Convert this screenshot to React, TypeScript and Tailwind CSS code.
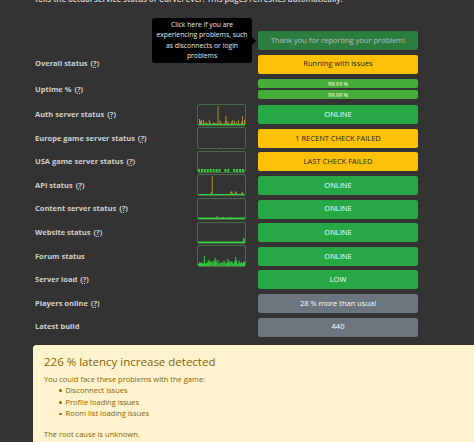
import React from "react";

type Bar = { x: number; h: number; w?: number; c: string };

const GOLD = "#b59430";
const GREEN = "#2fd33a";

function rng(seed: number) {
  let s = seed;
  return () => {
    s = (s * 16807) % 2147483647;
    return (s - 1) / 2147483646;
  };
}

function makeChart(kind: string): Bar[] {
  const r = rng(kind.length * 97 + 13);
  const bars: Bar[] = [];
  if (kind === "auth") {
    for (let i = 0; i < 48; i++) {
      const v = r();
      if (v > 0.25) bars.push({ x: i, h: 1 + r() * 5, c: GOLD });
    }
    bars.push({ x: 20, h: 19, c: GOLD }, { x: 28, h: 9, c: GOLD }, { x: 45, h: 9, c: GOLD });
    bars.push({ x: 0, h: 1, w: 48, c: GREEN });
  }
  if (kind === "europe") {
    bars.push({ x: 22, h: 0.6, c: "#777" });
  }
  if (kind === "usa") {
    for (let i = 0; i < 48; i += 3) {
      if (i === 24 || i === 33) continue;
      bars.push({ x: i, h: 3, w: 2, c: GREEN });
    }
  }
  if (kind === "api") {
    bars.push({ x: 14, h: 19, c: GOLD }, { x: 13, h: 3, c: GOLD });
    for (let i = 32; i < 46; i++) {
      if (r() > 0.4) bars.push({ x: i, h: 1 + r() * 3, c: GOLD });
    }
    bars.push({ x: 0, h: 1, w: 48, c: GREEN });
  }
  if (kind === "content") {
    bars.push({ x: 0, h: 1.5, w: 48, c: GREEN });
    bars.push({ x: 19, h: 3, c: GOLD }, { x: 25, h: 2, c: GREEN }, { x: 33, h: 2, c: GREEN });
  }
  if (kind === "website") {
    bars.push({ x: 0, h: 1.5, w: 48, c: GREEN });
    bars.push({ x: 46, h: 5, w: 1.5, c: GREEN });
  }
  if (kind === "forum") {
    for (let i = 0; i < 48; i++) {
      bars.push({ x: i, h: 2 + r() * 4, c: GREEN });
    }
    bars.push({ x: 6, h: 10, c: GREEN }, { x: 17, h: 8, c: GREEN }, { x: 30, h: 7, c: GREEN }, { x: 38, h: 9, c: GREEN });
  }
  return bars;
}

function Chart({ kind }: { kind: string }) {
  const bars = makeChart(kind);
  return (
    <div className="w-[49px] h-[22px] border border-[#4b6a4b] rounded-[2px] overflow-hidden">
      <svg width="47" height="20" viewBox="0 0 48 20" preserveAspectRatio="none">
        {bars.map((b, i) => (
          <rect key={i} x={b.x} y={20 - b.h} width={b.w ?? 1} height={b.h} fill={b.c} />
        ))}
      </svg>
    </div>
  );
}

function Help() {
  return (
    <span className="ml-[3px]">
      (<span className="underline decoration-dotted">?</span>)
    </span>
  );
}

type Row = {
  label: string;
  help?: boolean;
  chart?: string;
  text: string;
  tone: "green" | "yellow" | "gray";
};

const rows: Row[] = [
  { label: "Auth server status", help: true, chart: "auth", text: "ONLINE", tone: "green" },
  { label: "Europe game server status", help: true, chart: "europe", text: "1 RECENT CHECK FAILED", tone: "yellow" },
  { label: "USA game server status", help: true, chart: "usa", text: "LAST CHECK FAILED", tone: "yellow" },
  { label: "API status", help: true, chart: "api", text: "ONLINE", tone: "green" },
  { label: "Content server status", help: true, chart: "content", text: "ONLINE", tone: "green" },
  { label: "Website status", help: true, chart: "website", text: "ONLINE", tone: "green" },
  { label: "Forum status", chart: "forum", text: "ONLINE", tone: "green" },
  { label: "Server load", help: true, text: "LOW", tone: "green" },
  { label: "Players online", help: true, text: "28 % more than usual", tone: "gray" },
  { label: "Latest build", text: "440", tone: "gray" },
];

const toneClass = {
  green: "bg-[#28a745] text-white",
  yellow: "bg-[#ffc107] text-[#212529]",
  gray: "bg-[#6c757d] text-white",
};

function Status({ text, tone }: { text: string; tone: Row["tone"] }) {
  return (
    <div className={`w-[160px] h-[19px] rounded-[2px] flex items-center justify-center text-[7.5px] ${toneClass[tone]}`}>
      {text}
    </div>
  );
}

const bullets = ["Disconnect issues", "Profile loading issues", "Room list loading issues"];

export default function App() {
  return (
    <div className="h-[442px] overflow-hidden bg-[#333333] font-['Open_Sans',sans-serif]">
      <p className="pl-[35px] -mt-[7px] h-[10px] text-[8px] font-semibold text-[#d6d6d6] whitespace-nowrap">
        tells the actual service status of CurveFever. This pages refreshes automatically.
      </p>

      <div className="relative pl-[35px] pt-[25.7px]">
        <div className="absolute left-[152px] top-[15px] w-[100px] h-[45px] bg-black rounded-[3px] flex items-center justify-center text-center text-[6.8px] leading-[10.5px] text-[#e8e8e8]">
          Click here if you are
          <br />
          experiencing problems, such
          <br />
          as disconnects or login
          <br />
          problems
          <span className="absolute -right-[4px] top-[19px] w-0 h-0 border-y-[4px] border-y-transparent border-l-[4px] border-l-black" />
        </div>

        <div className="flex flex-col">
          <div className="h-[23.6px] flex items-center">
            <div className="w-[223px]" />
            <div className="w-[160px] h-[19px] rounded-[2px] bg-[#28a745] opacity-65 text-white text-[7.5px] flex items-center justify-center">
              Thank you for reporting your problem!
            </div>
          </div>

          <div className="h-[23.6px] flex items-center">
            <div className="w-[223px] text-[7.5px] font-bold text-[#d0d0d0]">
              Overall status
              <Help />
            </div>
            <Status text="Running with issues" tone="yellow" />
          </div>

          <div className="h-[27px] flex items-center">
            <div className="w-[223px] text-[7.5px] font-bold text-[#d0d0d0]">
              Uptime %
              <Help />
            </div>
            <div className="w-[160px] flex flex-col gap-[2px]">
              <div className="h-[9px] rounded-[2px] bg-[#46ad38] text-white text-[5.5px] flex items-center justify-center">
                99.93 %
              </div>
              <div className="h-[9px] rounded-[2px] bg-[#46ad38] text-white text-[5.5px] flex items-center justify-center">
                99.99 %
              </div>
            </div>
          </div>

          {rows.map((row) => (
            <div key={row.label} className="h-[23.6px] flex items-center">
              <div className="w-[162px] text-[7.5px] font-bold text-[#d0d0d0] whitespace-nowrap">
                {row.label}
                {row.help && <Help />}
              </div>
              <div className="w-[61px]">{row.chart && <Chart kind={row.chart} />}</div>
              <Status text={row.text} tone={row.tone} />
            </div>
          ))}
        </div>
      </div>

      <div className="ml-[33px] mt-[6px] w-[460px] bg-[#fff3cd] border border-[#ffeeba] rounded-[3px] pl-[10px] pt-[7px] pb-[10px] text-[#856404]">
        <h4 className="text-[11.5px] leading-[18px]">226 % latency increase detected</h4>
        <p className="mt-[3px] text-[7.5px] leading-[11px]">You could face these problems with the game:</p>
        <ul className="pl-[15px] text-[7.5px] leading-[11.7px]">
          {bullets.map((b) => (
            <li key={b} className="flex items-center">
              <span className="w-[2.5px] h-[2.5px] rounded-full bg-[#856404] mr-[4px]" />
              {b}
            </li>
          ))}
        </ul>
        <p className="mt-[9px] text-[7.5px] leading-[11px]">The root cause is unknown.</p>
      </div>
    </div>
  );
}
